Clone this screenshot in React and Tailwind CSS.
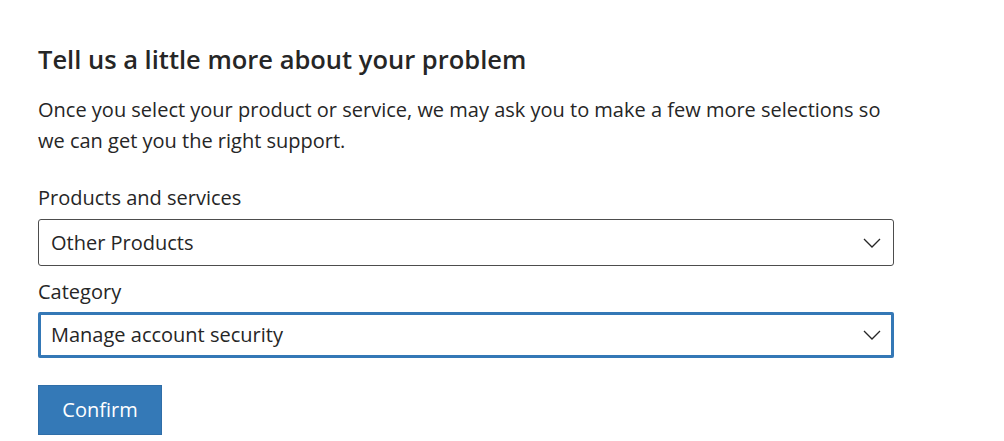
import React from "react";

function Chevron() {
  return (
    <svg width="18" height="10" viewBox="0 0 18 10" fill="none" className="shrink-0">
      <path d="M1 1 L9 9 L17 1" stroke="#262626" strokeWidth="1.3" />
    </svg>
  );
}

export default function App() {
  return (
    <div className="w-[1004px] h-[441px] bg-white overflow-hidden pl-[38px] pt-[40px] text-[#262626]" style={{ fontFamily: '"Open Sans", "Noto Sans", sans-serif' }}>
      <div className="w-[856px]">
        <h2 className="text-[25.5px] font-semibold leading-[38px]">Tell us a little more about your problem</h2>
        <p className="mt-[16px] text-[20px] leading-[31px]">
          Once you select your product or service, we may ask you to make a few more selections so we can get you the right support.
        </p>
        <div className="mt-[29px] text-[20px] leading-[26px]">Products and services</div>
        <div className="mt-[8px] h-[47px] border border-[#4d4d4d] rounded-[3px] flex items-center justify-between pl-[12px] pr-[12px]">
          <span className="text-[20px]">Other Products</span>
          <Chevron />
        </div>
        <div className="mt-[13px] text-[20px] leading-[26px]">Category</div>
        <div className="mt-[7px] h-[46px] border-[3px] border-[#3478b6] rounded-[2px] flex items-center justify-between pl-[10px] pr-[10px]">
          <span className="text-[20px]">Manage account security</span>
          <Chevron />
        </div>
        <button className="mt-[27px] w-[124px] h-[50px] bg-[#3479b7] border border-[#2f6ea8] text-white text-[20px]">Confirm</button>
      </div>
    </div>
  );
}
